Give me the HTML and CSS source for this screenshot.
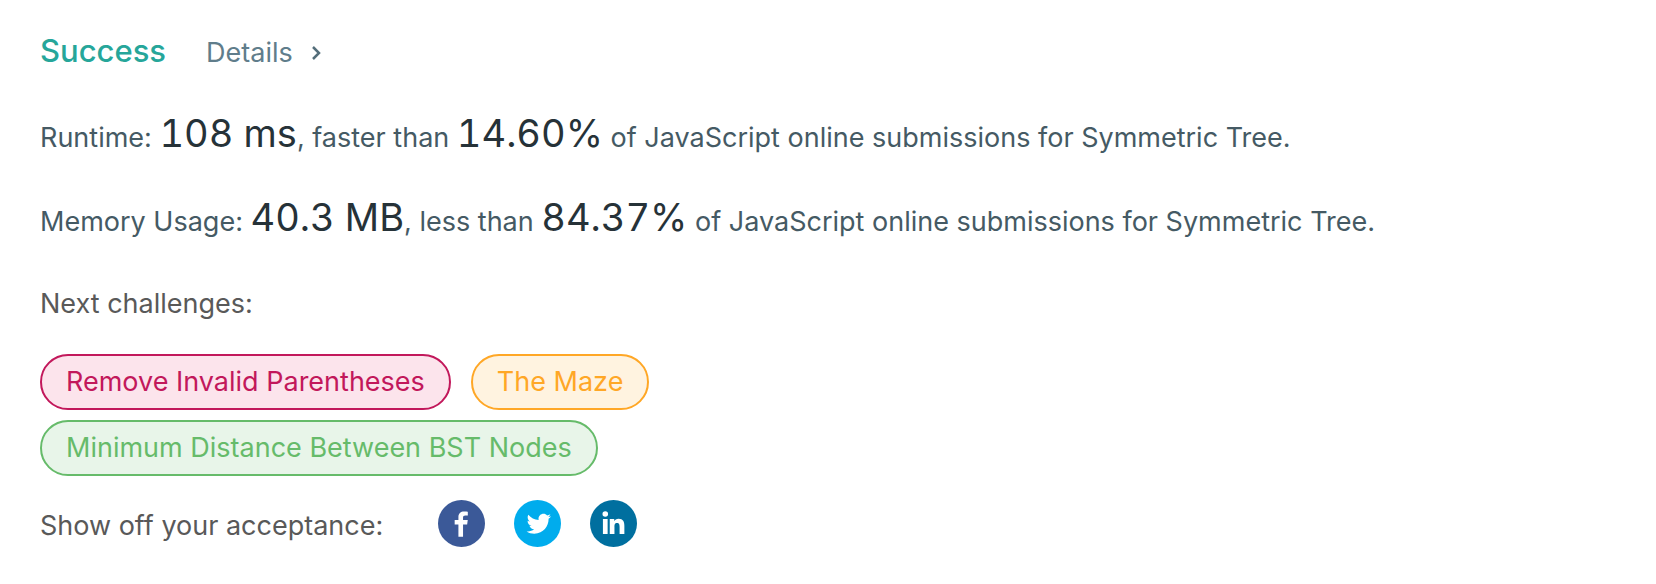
FILE: index.html
```
<!DOCTYPE html>
<html lang="en">
<head>
  <meta charset="UTF-8" />
  <meta name="viewport" content="width=device-width, initial-scale=1.0" />
  <title>Submission Result</title>
  <link rel="stylesheet" href="styles.css">
</head>
<body>
  <main class="result">
    <div class="result-header">
      <h1 class="status">Success</h1>
      <a class="details" href="#">
        Details
        <svg class="chevron" viewBox="0 0 10 16" aria-hidden="true">
          <path d="M2 2l6 6-6 6" />
        </svg>
      </a>
    </div>

    <p class="stat">Runtime: <span class="value">108 ms</span>, faster than <span class="value">14.60%</span> of JavaScript online submissions for Symmetric Tree.</p>
    <p class="stat">Memory Usage: <span class="value">40.3 MB</span>, less than <span class="value">84.37%</span> of JavaScript online submissions for Symmetric Tree.</p>

    <h2 class="label">Next challenges:</h2>
    <div class="challenges">
      <a class="tag hard" href="#">Remove Invalid Parentheses</a>
      <a class="tag medium" href="#">The Maze</a>
      <a class="tag easy" href="#">Minimum Distance Between BST Nodes</a>
    </div>

    <div class="share">
      <h2 class="label">Show off your acceptance:</h2>
      <div class="share-buttons">
        <button class="share-btn" type="button" aria-label="Share on Facebook">
          <svg viewBox="0 0 64 64">
            <circle cx="32" cy="32" r="32" fill="#3b5998" />
            <path fill="#fff" d="M34.1 50V33.3h5.6l.8-6.1h-6.4v-3.1c0-1.9.8-3.1 3.2-3.1h3.3v-4.9c-.7-.1-2.6-.3-4.9-.3-4.9 0-7.9 2.6-7.9 7.7v3.7H22.7v6.1h5.1V50h6.3z" />
          </svg>
        </button>
        <button class="share-btn" type="button" aria-label="Share on Twitter">
          <svg viewBox="0 0 64 64">
            <circle cx="32" cy="32" r="32" fill="#00aced" />
            <path fill="#fff" transform="translate(.5 -1) scale(1.04)" d="M48,22.1c-1.2,0.5-2.4,0.9-3.8,1c1.4-0.8,2.4-2.1,2.9-3.6c-1.3,0.8-2.7,1.3-4.2,1.6C41.7,19.8,40,19,38.2,19c-3.6,0-6.6,2.9-6.6,6.6c0,0.5,0.1,1,0.2,1.5c-5.5-0.3-10.3-2.9-13.5-6.9c-0.6,1-0.9,2.1-0.9,3.3c0,2.3,1.2,4.3,2.9,5.5c-1.1,0-2.1-0.3-3-0.8v0.1c0,3.2,2.3,5.8,5.3,6.4c-0.6,0.1-1.1,0.2-1.7,0.2c-0.4,0-0.8,0-1.2-0.1c0.8,2.6,3.3,4.5,6.1,4.6c-2.2,1.8-5.1,2.8-8.2,2.8c-0.5,0-1.1,0-1.6-0.1c2.9,1.9,6.4,2.9,10.1,2.9c12.1,0,18.7-10,18.7-18.7c0-0.3,0-0.6,0-0.8C46,24.5,47.1,23.4,48,22.1z" />
          </svg>
        </button>
        <button class="share-btn" type="button" aria-label="Share on LinkedIn">
          <svg viewBox="0 0 64 64">
            <circle cx="32" cy="32" r="32" fill="#006f9f" />
            <path fill="#fff" d="M17.6 25.9h6.4V46.3h-6.4zM20.8 15.2a3.8 3.8 0 1 1 0 7.6 3.8 3.8 0 0 1 0-7.6zM26.9 25.9h6.1v2.8h.1c.8-1.5 2.7-3.2 5.8-3.2 6.3 0 7.9 4 7.9 9.4V46.3h-6.5v-9.9c0-2.4-.3-5.2-3.5-5.2-3.3 0-3.5 2.7-3.5 5.3V46.3h-6.4z" />
          </svg>
        </button>
      </div>
    </div>
  </main>
</body>
</html>
```
FILE: styles.css
```
body {
  margin: 0;
  background: #fff;
  color: #595959;
  font-family: Inter, sans-serif;
  font-size: 27px;
  line-height: 40px;
}

a {
  text-decoration: none;
}

.result {
  padding: 31px 40px;
}

.result-header {
  display: flex;
  align-items: baseline;
  gap: 40px;
  padding-bottom: 5px;
}

.status {
  margin: 0;
  color: #26a69a;
  font-size: 31px;
  font-weight: 500;
}

.details {
  display: flex;
  align-items: center;
  gap: 18px;
  color: #607d8b;
}

.chevron {
  width: 10px;
  height: 16px;
  fill: none;
  stroke: #546e7a;
  stroke-width: 2.5;
}

.stat {
  margin: 36px 0 0;
  color: #455a64;
  line-height: 48px;
}

.value {
  color: #263238;
  font-size: 38px;
  font-variant-numeric: tabular-nums;
  line-height: 1;
}

.label {
  margin: 0;
  font-size: inherit;
  font-weight: 400;
}

.stat + .label {
  margin-top: 38px;
}

.challenges {
  display: flex;
  flex-wrap: wrap;
  gap: 10px 20px;
  max-width: 720px;
  margin-top: 30px;
}

.tag {
  padding: 6px 24px;
  border: 2px solid;
  border-radius: 28px;
}

.hard {
  background: #fce4ec;
  color: #c2185b;
}

.medium {
  background: #fff3e0;
  color: #ffa726;
}

.easy {
  background: #e8f5e9;
  color: #66bb6a;
}

.share {
  display: flex;
  align-items: center;
  gap: 55px;
  margin-top: 24px;
}

.share-buttons {
  display: flex;
  gap: 29px;
  padding-bottom: 4px;
}

.share-btn {
  width: 47px;
  height: 47px;
  padding: 0;
  border: 0;
  background: none;
  cursor: pointer;
}

.share-btn svg {
  display: block;
}
```
